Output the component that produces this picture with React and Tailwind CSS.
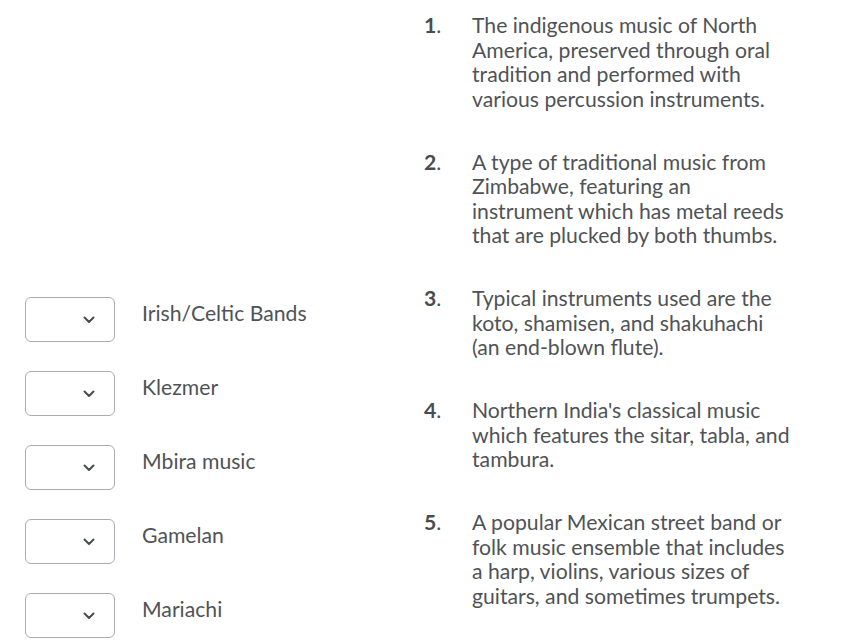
import React from 'react';

const options = ['Irish/Celtic Bands', 'Klezmer', 'Mbira music', 'Gamelan', 'Mariachi'];

const descriptions = [
  'The indigenous music of North America, preserved through oral tradition and performed with various percussion instruments.',
  'A type of traditional music from Zimbabwe, featuring an instrument which has metal reeds that are plucked by both thumbs.',
  'Typical instruments used are the koto, shamisen, and shakuhachi (an end-blown flute).',
  "Northern India's classical music which features the sitar, tabla, and tambura.",
  'A popular Mexican street band or folk music ensemble that includes a harp, violins, various sizes of guitars, and sometimes trumpets.',
];

const Chevron = () => (
  <svg width="12" height="8" viewBox="0 0 12 8" fill="none">
    <path d="M1.5 1.5 L6 6 L10.5 1.5" stroke="#494c4e" strokeWidth="2" strokeLinecap="round" strokeLinejoin="round" />
  </svg>
);

const App = () => {
  return (
    <div className="w-[841px] h-[642px] bg-white overflow-hidden flex font-['Lato',sans-serif] text-[#505356]">
      {/* Choices with dropdowns */}
      <div className="w-[424px] pl-[25px] pt-[297px] flex flex-col gap-[29px]">
        {options.map((label) => (
          <div key={label} className="flex items-start">
            <div className="w-[90px] h-[45px] shrink-0 rounded-[6px] border border-[#a9adb1] bg-white flex items-center justify-end pr-[19px] pt-[1px]">
              <Chevron />
            </div>
            <span className="ml-[27px] mt-[4px] text-[21.2px] leading-[24.5px]">{label}</span>
          </div>
        ))}
      </div>

      {/* Numbered descriptions */}
      <ol className="pt-[13px] flex flex-col gap-[38.5px]">
        {descriptions.map((text, i) => (
          <li key={i} className="flex text-[21.2px] leading-[24.5px]">
            <span className="w-[48px] shrink-0">
              <span className="font-bold text-[#494c4e]">{i + 1}</span>.
            </span>
            <span className="w-[318px]">{text}</span>
          </li>
        ))}
      </ol>
    </div>
  );
};

export default App;
